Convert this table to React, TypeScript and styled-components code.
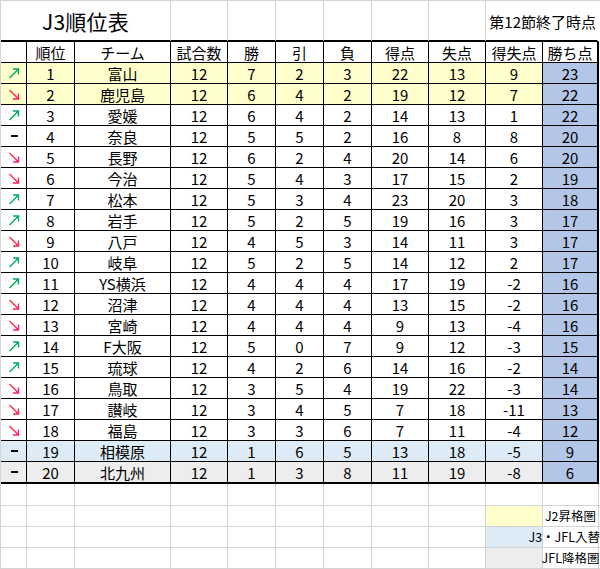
import React from "react";
import styled, { createGlobalStyle, css } from "styled-components";

const GlobalStyle = createGlobalStyle`
  html, body { margin: 0; padding: 0; background: #ffffff; overflow: hidden; }
  body { font-family: "Noto Sans CJK JP", "Noto Sans", sans-serif; color: #000; }
`;

const COLS = [26, 48, 96, 57, 48, 48, 48, 57, 57, 57, 56, 20];
const GRID = "#d4d4d4";
const INK = "#000000";

const Sheet = styled.div`
  display: grid;
  grid-template-columns: ${COLS.map((c) => `${c}px`).join(" ")};
  border-left: 1px solid ${GRID};
  border-top: 1px solid ${GRID};
  width: max-content;
`;

type CellProps = {
  $h: number;
  $bg?: string;
  $right?: string;
  $bottom?: string;
  $span?: number;
  $align?: "center" | "right" | "left";
  $size?: number;
  $pad?: number;
  $overflow?: boolean;
};

const Cell = styled.div<CellProps>`
  box-sizing: border-box;
  height: ${(p) => p.$h}px;
  background: ${(p) => p.$bg ?? "#ffffff"};
  border-right: ${(p) => p.$right ?? `1px solid ${GRID}`};
  border-bottom: ${(p) => p.$bottom ?? `1px solid ${GRID}`};
  grid-column: span ${(p) => p.$span ?? 1};
  display: flex;
  align-items: center;
  justify-content: ${(p) =>
    p.$align === "right" ? "flex-end" : p.$align === "left" ? "flex-start" : "center"};
  padding-right: ${(p) => p.$pad ?? 0}px;
  font-size: ${(p) => p.$size ?? 15}px;
  line-height: 1;
  white-space: nowrap;
  ${(p) =>
    p.$overflow
      ? css`
          overflow: visible;
          position: relative;
          z-index: 1;
        `
      : css`
          overflow: hidden;
        `}
`;

const Title = styled.span`
  font-size: 21px;
  letter-spacing: 0.2px;
  padding-top: 2px;
`;

const Note = styled.span`
  font-size: 15px;
  padding-top: 2px;
`;

const Legend = styled.span`
  font-size: 12.5px;
  margin: 0 -40px;
`;

const ArrowUp = () => (
  <svg width="12" height="11" viewBox="0 0 12 11">
    <defs>
      <linearGradient id="gu" x1="0" y1="1" x2="1" y2="0">
        <stop offset="0" stopColor="#00b050" />
        <stop offset="1" stopColor="#00a86b" />
      </linearGradient>
    </defs>
    <path d="M1.5 10 L10.5 1 M5 1 L10.5 1 L10.5 6.5" stroke="url(#gu)" strokeWidth="1.4" fill="none" />
  </svg>
);

const ArrowDown = () => (
  <svg width="12" height="11" viewBox="0 0 12 11">
    <defs>
      <linearGradient id="gd" x1="0" y1="0" x2="1" y2="1">
        <stop offset="0" stopColor="#ff3030" />
        <stop offset="1" stopColor="#ff2060" />
      </linearGradient>
    </defs>
    <path d="M1.5 1 L10.5 10 M10.5 4.5 L10.5 10 L5 10" stroke="url(#gd)" strokeWidth="1.4" fill="none" />
  </svg>
);

const Dash = styled.span`
  display: block;
  width: 7px;
  height: 2px;
  background: #000;
  margin-left: 1px;
`;

type Trend = "up" | "down" | "same";
type Team = [Trend, number, string, number, number, number, number, number, number, number, number];

const TEAMS: Team[] = [
  ["up", 1, "富山", 12, 7, 2, 3, 22, 13, 9, 23],
  ["down", 2, "鹿児島", 12, 6, 4, 2, 19, 12, 7, 22],
  ["up", 3, "愛媛", 12, 6, 4, 2, 14, 13, 1, 22],
  ["same", 4, "奈良", 12, 5, 5, 2, 16, 8, 8, 20],
  ["down", 5, "長野", 12, 6, 2, 4, 20, 14, 6, 20],
  ["down", 6, "今治", 12, 5, 4, 3, 17, 15, 2, 19],
  ["up", 7, "松本", 12, 5, 3, 4, 23, 20, 3, 18],
  ["up", 8, "岩手", 12, 5, 2, 5, 19, 16, 3, 17],
  ["down", 9, "八戸", 12, 4, 5, 3, 14, 11, 3, 17],
  ["up", 10, "岐阜", 12, 5, 2, 5, 14, 12, 2, 17],
  ["up", 11, "YS横浜", 12, 4, 4, 4, 17, 19, -2, 16],
  ["down", 12, "沼津", 12, 4, 4, 4, 13, 15, -2, 16],
  ["down", 13, "宮崎", 12, 4, 4, 4, 9, 13, -4, 16],
  ["up", 14, "F大阪", 12, 5, 0, 7, 9, 12, -3, 15],
  ["up", 15, "琉球", 12, 4, 2, 6, 14, 16, -2, 14],
  ["down", 16, "鳥取", 12, 3, 5, 4, 19, 22, -3, 14],
  ["down", 17, "讃岐", 12, 3, 4, 5, 7, 18, -11, 13],
  ["down", 18, "福島", 12, 3, 3, 6, 7, 11, -4, 12],
  ["same", 19, "相模原", 12, 1, 6, 5, 13, 18, -5, 9],
  ["same", 20, "北九州", 12, 1, 3, 8, 11, 19, -8, 6],
];

const HEADERS = ["", "順位", "チーム", "試合数", "勝", "引", "負", "得点", "失点", "得失点", "勝ち点"];

const YELLOW = "#ffffcc";
const LIGHTBLUE = "#ddebf7";
const GRAY = "#ededed";
const POINTS = "#b4c6e7";

const rowBg = (rank: number) =>
  rank <= 2 ? YELLOW : rank === 19 ? LIGHTBLUE : rank === 20 ? GRAY : "#ffffff";

const thin = `1px solid ${INK}`;
const thick = `2px solid ${INK}`;

const TrendMark = ({ t }: { t: Trend }) =>
  t === "up" ? <ArrowUp /> : t === "down" ? <ArrowDown /> : <Dash />;

export default function App() {
  const cells: React.ReactNode[] = [];

  // Title row
  cells.push(
    <Cell key="t0" $h={41} $span={3} $bottom={thick}>
      <Title>J3順位表</Title>
    </Cell>
  );
  for (let i = 3; i < 9; i++) {
    cells.push(<Cell key={`t${i}`} $h={41} $bottom={thick} />);
  }
  cells.push(
    <Cell key="t9" $h={41} $span={2} $bottom={thick} $align="right" $pad={1} $right={`2px solid transparent`}>
      <Note>第12節終了時点</Note>
    </Cell>
  );
  cells.push(<Cell key="t11" $h={41} />);

  // Header row
  HEADERS.forEach((h, i) => {
    cells.push(
      <Cell key={`h${i}`} $h={21} $bottom={thin} $right={i === 10 ? thick : thin}>
        {h}
      </Cell>
    );
  });
  cells.push(<Cell key="h11" $h={21} />);

  // Data rows
  TEAMS.forEach((team) => {
    const [trend, rank, ...rest] = team;
    const bg = rowBg(rank);
    const last = rank === 20;
    const h = last ? 22 : 21;
    const bottom = last ? thick : thin;
    cells.push(
      <Cell key={`r${rank}-0`} $h={h} $bg={bg} $bottom={bottom} $right={thin}>
        <TrendMark t={trend} />
      </Cell>
    );
    cells.push(
      <Cell key={`r${rank}-1`} $h={h} $bg={bg} $bottom={bottom} $right={thin}>
        {rank}
      </Cell>
    );
    rest.forEach((v, i) => {
      const isPts = i === rest.length - 1;
      cells.push(
        <Cell
          key={`r${rank}-${i + 2}`}
          $h={h}
          $bg={isPts ? POINTS : bg}
          $bottom={bottom}
          $right={isPts ? thick : thin}
        >
          {v}
        </Cell>
      );
    });
    cells.push(<Cell key={`r${rank}-x`} $h={h} />);
  });

  // Empty rows with legend
  const legend: Record<number, [string, string]> = {
    1: [YELLOW, "J2昇格圏"],
    2: [LIGHTBLUE, "J3・JFL入替戦"],
    3: [GRAY, "JFL降格圏"],
  };
  for (let r = 0; r < 4; r++) {
    const h = r === 0 ? 22 : 21;
    for (let c = 0; c < COLS.length; c++) {
      const entry = legend[r];
      if (entry && c === 9) {
        cells.push(<Cell key={`e${r}-${c}`} $h={h} $bg={entry[0]} />);
      } else if (entry && c === 10) {
        cells.push(
          <Cell key={`e${r}-${c}`} $h={h} $overflow>
            <Legend>{entry[1]}</Legend>
          </Cell>
        );
      } else {
        cells.push(<Cell key={`e${r}-${c}`} $h={h} />);
      }
    }
  }

  return (
    <>
      <GlobalStyle />
      <Sheet>{cells}</Sheet>
    </>
  );
}
